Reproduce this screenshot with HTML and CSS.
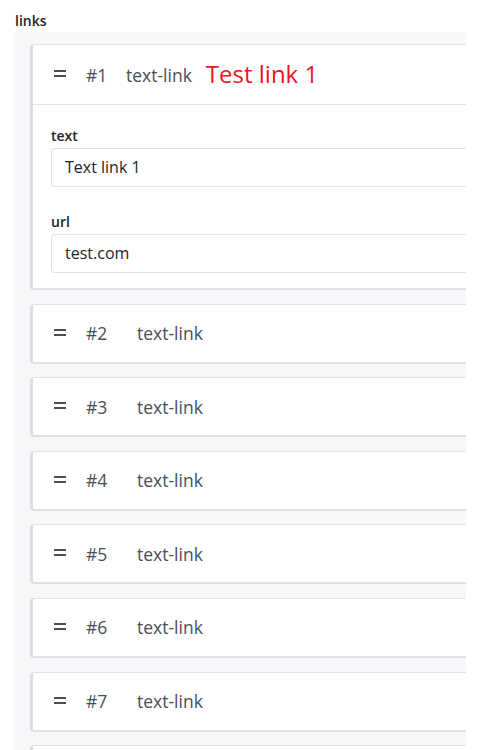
FILE: index.html
```html
<!DOCTYPE html>
<html>
<head>
<meta charset="utf-8">
<link rel="stylesheet" href="styles.css">
</head>
<body>
<div class="title">links</div>
<div class="list">
  <div class="card">
    <div class="head open">
      <span class="handle"></span>
      <span class="num first">#1</span>
      <span class="type first">text-link</span>
      <span class="preview">Test link 1</span>
    </div>
    <div class="body">
      <div class="field">
        <div class="label">text</div>
        <div class="input">Text link 1</div>
      </div>
      <div class="field">
        <div class="label">url</div>
        <div class="input">test.com</div>
      </div>
    </div>
  </div>
  <div class="card"><div class="head"><span class="handle"></span><span class="num">#2</span><span class="type">text-link</span></div></div>
  <div class="card"><div class="head"><span class="handle"></span><span class="num">#3</span><span class="type">text-link</span></div></div>
  <div class="card"><div class="head"><span class="handle"></span><span class="num">#4</span><span class="type">text-link</span></div></div>
  <div class="card"><div class="head"><span class="handle"></span><span class="num">#5</span><span class="type">text-link</span></div></div>
  <div class="card"><div class="head"><span class="handle"></span><span class="num">#6</span><span class="type">text-link</span></div></div>
  <div class="card"><div class="head"><span class="handle"></span><span class="num">#7</span><span class="type">text-link</span></div></div>
  <div class="card"><div class="head"><span class="handle"></span><span class="num">#8</span><span class="type">text-link</span></div></div>
</div>
</body>
</html>
```
FILE: styles.css
```css
html, body {
  margin: 0;
  padding: 0;
  background: #fff;
  font-family: "Open Sans", "Noto Sans", sans-serif;
  color: #212529;
  overflow: hidden;
}
.title {
  font-size: 14px;
  font-weight: 600;
  padding: 11px 0 0 15px;
  height: 21px;
  line-height: 20px;
}
.list {
  margin-left: 14px;
  width: 452px;
  background: #f6f7f9;
  padding: 12px 0 20px 16px;
  box-sizing: border-box;
  display: flex;
  flex-direction: column;
  gap: 13.6px;
}
.card {
  background: #fff;
  border-top: 1px solid #e2e3e6;
  border-left: 3px solid #dcdee1;
  border-bottom: 2px solid #dfe0e3;
  border-radius: 4px 0 0 4px;
}
.head {
  height: 57px;
  display: flex;
  align-items: center;
  padding-left: 21px;
  color: #4a4f55;
  font-size: 17.5px;
}
.head.open {
  height: 59px;
}
.handle {
  width: 12px;
  height: 7px;
  border-top: 2px solid #4a4f55;
  border-bottom: 2px solid #4a4f55;
  box-sizing: border-box;
  margin-right: 20px;
  margin-top: -2px;
}
.num {
  width: 51px;
}
.num.first {
  width: 40px;
}
.type.first {
  margin-right: 14px;
}
.preview {
  color: #f0141e;
  font-size: 24px;
  margin-top: -2px;
}
.body {
  border-top: 1px solid #e2e3e6;
  padding: 22px 0 15px 18px;
  display: flex;
  flex-direction: column;
  gap: 26px;
}
.label {
  font-size: 14px;
  font-weight: 600;
  line-height: 18px;
  margin-bottom: 3px;
}
.input {
  height: 39px;
  box-sizing: border-box;
  border: 1px solid #dfe1e4;
  border-right: none;
  border-radius: 4px 0 0 4px;
  padding-left: 13px;
  font-size: 16px;
  line-height: 37px;
  color: #212529;
}
```
